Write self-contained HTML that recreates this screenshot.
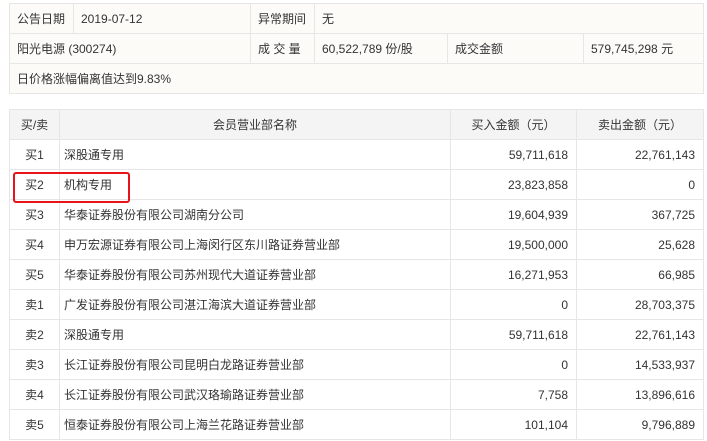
<!DOCTYPE html><html><head><meta charset="utf-8"><style>
body{margin:0;background:#fff;font-family:"Liberation Sans","Noto Sans CJK SC",sans-serif;font-size:12px;color:#333;width:707px;height:441px;overflow:hidden;position:relative}
table{border-collapse:collapse;position:absolute;left:9px;table-layout:fixed}
td{border:1px solid #e6e6e6;padding:0 0 0 7px;height:29px;white-space:nowrap}
#t1{top:3px;width:694px;background:#fcfbf8}
#t2{top:109px;width:694px}
#t2 td{height:29px;padding-left:4px}
#t2 tr.h td{background:#f4f4f4;text-align:center;padding:0}
#t2 td.c{text-align:center;padding:0}
#t2 td.r{text-align:right;padding:0 8px 0 0}
.box{position:absolute;left:13px;top:172px;width:113px;height:27px;border:2.5px solid #e8141b;border-radius:3px}
</style></head><body>
<table id="t1"><colgroup><col style="width:64px"><col style="width:177px"><col style="width:64px"><col style="width:133px"><col style="width:136px"><col style="width:120px"></colgroup>
<tr><td>公告日期</td><td>2019-07-12</td><td>异常期间</td><td colspan="3">无</td></tr>
<tr><td colspan="2">阳光电源 (300274)</td><td>成 交 量</td><td>60,522,789 份/股</td><td>成交金额</td><td>579,745,298 元</td></tr>
<tr><td colspan="6">日价格涨幅偏离值达到9.83%</td></tr>
</table>
<table id="t2"><colgroup><col style="width:50px"><col style="width:391px"><col style="width:126px"><col style="width:127px"></colgroup>
<tr class="h"><td>买/卖</td><td>会员营业部名称</td><td>买入金额（元）</td><td>卖出金额（元）</td></tr>
<tr><td class="c">买1</td><td>深股通专用</td><td class="r">59,711,618</td><td class="r">22,761,143</td></tr>
<tr><td class="c">买2</td><td>机构专用</td><td class="r">23,823,858</td><td class="r">0</td></tr>
<tr><td class="c">买3</td><td>华泰证券股份有限公司湖南分公司</td><td class="r">19,604,939</td><td class="r">367,725</td></tr>
<tr><td class="c">买4</td><td>申万宏源证券有限公司上海闵行区东川路证券营业部</td><td class="r">19,500,000</td><td class="r">25,628</td></tr>
<tr><td class="c">买5</td><td>华泰证券股份有限公司苏州现代大道证券营业部</td><td class="r">16,271,953</td><td class="r">66,985</td></tr>
<tr><td class="c">卖1</td><td>广发证券股份有限公司湛江海滨大道证券营业部</td><td class="r">0</td><td class="r">28,703,375</td></tr>
<tr><td class="c">卖2</td><td>深股通专用</td><td class="r">59,711,618</td><td class="r">22,761,143</td></tr>
<tr><td class="c">卖3</td><td>长江证券股份有限公司昆明白龙路证券营业部</td><td class="r">0</td><td class="r">14,533,937</td></tr>
<tr><td class="c">卖4</td><td>长江证券股份有限公司武汉珞瑜路证券营业部</td><td class="r">7,758</td><td class="r">13,896,616</td></tr>
<tr><td class="c">卖5</td><td>恒泰证券股份有限公司上海兰花路证券营业部</td><td class="r">101,104</td><td class="r">9,796,889</td></tr>
</table>
<div class="box"></div>
</body></html>
